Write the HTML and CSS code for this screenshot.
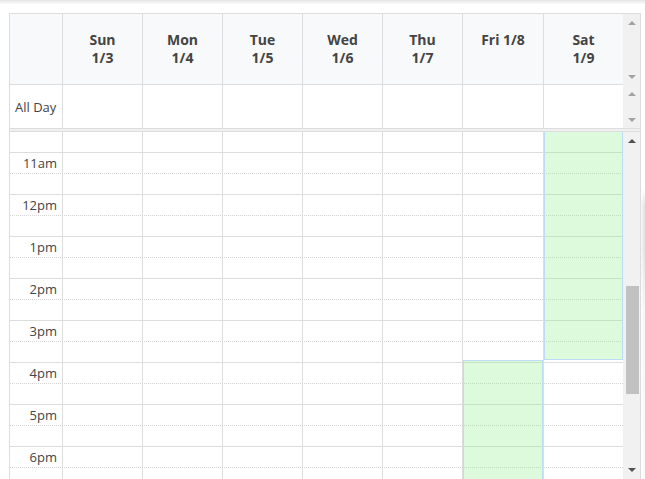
FILE: index.html
```html
<!DOCTYPE html>
<html>
<head>
<meta charset="utf-8">
<link rel="stylesheet" href="styles.css">
</head>
<body>
<div class="topshade"></div>
<div class="edgeshade"></div>
<div class="cal">
  <div class="head">
    <div class="cell axis hdr"></div>
    <div class="cell day hdr">Sun<br>1/3</div>
    <div class="cell day hdr">Mon<br>1/4</div>
    <div class="cell day hdr">Tue<br>1/5</div>
    <div class="cell day hdr">Wed<br>1/6</div>
    <div class="cell day hdr">Thu<br>1/7</div>
    <div class="cell day hdr">Fri 1/8</div>
    <div class="cell day hdr last">Sat<br>1/9</div>
    <div class="sbar hbar"><span class="arr up dis"></span><span class="arr down dis"></span></div>

    <div class="cell axis ad"><span class="adlbl">All Day</span></div>
    <div class="cell ad"></div>
    <div class="cell ad"></div>
    <div class="cell ad"></div>
    <div class="cell ad"></div>
    <div class="cell ad"></div>
    <div class="cell ad"></div>
    <div class="cell ad last"></div>
    <div class="sbar abar"><span class="arr up dis"></span><span class="arr down dis"></span></div>
  </div>
  <div class="sep"></div>
  <div class="body">
    <div class="scroller">
      <div class="slats">
        <div class="slat half"></div>
        <div class="slat full"><span class="tlbl">11am</span></div>
        <div class="slat half"></div>
        <div class="slat full"><span class="tlbl">12pm</span></div>
        <div class="slat half"></div>
        <div class="slat full"><span class="tlbl">1pm</span></div>
        <div class="slat half"></div>
        <div class="slat full"><span class="tlbl">2pm</span></div>
        <div class="slat half"></div>
        <div class="slat full"><span class="tlbl">3pm</span></div>
        <div class="slat half"></div>
        <div class="slat full"><span class="tlbl">4pm</span></div>
        <div class="slat half"></div>
        <div class="slat full"><span class="tlbl">5pm</span></div>
        <div class="slat half"></div>
        <div class="slat full"><span class="tlbl">6pm</span></div>
        <div class="slat half"></div>
      </div>
      <div class="cols">
        <div class="col axiscol"></div>
        <div class="col"></div>
        <div class="col"></div>
        <div class="col"></div>
        <div class="col"></div>
        <div class="col"></div>
        <div class="col"><div class="bg fri"></div></div>
        <div class="col last"><div class="bg sat"></div></div>
      </div>
    </div>
    <div class="sbar vbar">
      <span class="arr up"></span>
      <span class="thumb"></span>
      <span class="arr down"></span>
    </div>
  </div>
</div>
</body>
</html>
```

FILE: styles.css
```css
html, body {
  margin: 0;
  padding: 0;
  background: #fff;
  overflow: hidden;
  height: 479px;
}
body {
  font-family: "Open Sans", "Noto Sans", "Liberation Sans", sans-serif;
  color: #444;
  position: relative;
}
.topshade {
  height: 4px;
  background: linear-gradient(#e4e4e4, #fbfbfb);
}
.edgeshade {
  position: absolute;
  right: 0;
  top: 190px;
  width: 5px;
  height: 289px;
  background: linear-gradient(to right, rgba(255,255,255,0), rgba(220,220,220,0.9));
  -webkit-mask-image: linear-gradient(to bottom, rgba(0,0,0,0), #000 15px, #000 60px, rgba(0,0,0,0.3) 120px, rgba(0,0,0,0.2));
}
.cal {
  margin: 9px 0 0 9px;
  width: 630px;
  border: 1px solid #ddd;
  border-bottom: none;
}
.head {
  display: grid;
  grid-template-columns: 53px repeat(5, 80px) 81px 79px 17px;
  grid-template-rows: 71px 43px;
}
.cell {
  box-sizing: border-box;
  border-right: 1px solid #ddd;
}
.cell.last { border-right: none; }
.hdr {
  background: #f8f9fa;
  border-bottom: 1px solid #ddd;
  text-align: center;
  font-weight: 700;
  font-size: 14px;
  line-height: 18px;
  padding-top: 17px;
}
.ad {
  display: flex;
  align-items: center;
}
.adlbl {
  font-size: 13px;
  padding-left: 5px;
  padding-top: 1px;
}
.sbar {
  background: #f1f1f1;
  display: flex;
  flex-direction: column;
  align-items: center;
  justify-content: space-between;
  position: relative;
}
.hbar { padding: 7px 0 6px; }
.abar { padding: 7px 0 6px; }
.arr {
  width: 0;
  height: 0;
  border-left: 4px solid transparent;
  border-right: 4px solid transparent;
}
.arr.up { border-bottom: 4px solid #505050; }
.arr.down { border-top: 4px solid #505050; }
.arr.up.dis { border-bottom-color: #a3a3a3; }
.arr.down.dis { border-top-color: #a3a3a3; }
.sep {
  height: 2px;
  background: #f0f0f0;
  border-top: 1px solid #ddd;
  border-bottom: 1px solid #ddd;
}
.body {
  display: flex;
  height: 347px;
}
.scroller {
  position: relative;
  width: 613px;
  overflow: hidden;
}
.slat {
  height: 20px;
  display: flex;
  align-items: center;
}
.slat.half { border-bottom: 1px solid #ddd; }
.slat.full { border-bottom: 1px dotted #d4d4d4; }
.tlbl {
  width: 52px;
  box-sizing: border-box;
  text-align: right;
  padding-right: 5px;
  font-size: 13px;
  line-height: 20px;
}
.cols {
  position: absolute;
  inset: 0;
  display: grid;
  grid-template-columns: 53px repeat(5, 80px) 81px 79px;
}
.col {
  position: relative;
  border-right: 1px solid #ddd;
}
.col.last { border-right: none; }
.bg {
  position: absolute;
  left: 0;
  right: 0;
  box-sizing: border-box;
  background: rgba(144, 238, 144, 0.3);
  border: 1px solid #bcdcf5;
}
.sat {
  top: -2px;
  height: 230px;
}
.fri {
  top: 228px;
  height: 200px;
}
.vbar {
  width: 17px;
  padding: 7px 0 7px;
  box-sizing: border-box;
  height: 347px;
}
.thumb {
  position: absolute;
  left: 3px;
  top: 154px;
  width: 13px;
  height: 108px;
  background: #c1c1c1;
}
```
